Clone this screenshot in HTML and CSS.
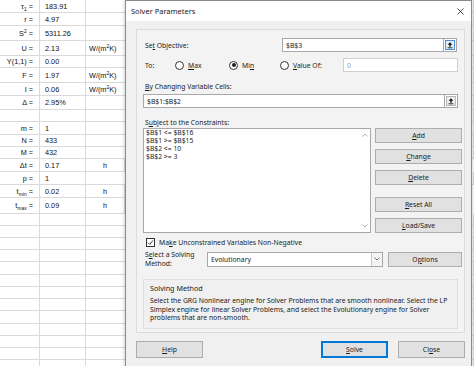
FILE: index.html
```html
<!DOCTYPE html>
<html>
	<head>
		<meta charset="utf-8">
		<title>Solver Parameters</title>
		<link rel="stylesheet" href="styles.css">
	</head>
	<body>
		<div class="sheet">
			<div class="row h13"><div class="lbl"><span>τ<sub>1</sub> =</span></div><div class="val">183.91</div><div class="unit"></div></div>
			<div class="row h13"><div class="lbl"><span>r =</span></div><div class="val">4.97</div><div class="unit"></div></div>
			<div class="row h15"><div class="lbl"><span>S<sup>2</sup> =</span></div><div class="val">5311.26</div><div class="unit"></div></div>
			<div class="row h15"><div class="lbl"><span>U =</span></div><div class="val">2.13</div><div class="unit"><span>W/(m<sup>2</sup>K)</span></div></div>
			<div class="row h12"><div class="lbl"><span>Y(1,1) =</span></div><div class="val">0.00</div><div class="unit"></div></div>
			<div class="row h15"><div class="lbl"><span>F =</span></div><div class="val">1.97</div><div class="unit"><span>W/(m<sup>2</sup>K)</span></div></div>
			<div class="row h13"><div class="lbl"><span>I =</span></div><div class="val">0.06</div><div class="unit"><span>W/(m<sup>2</sup>K)</span></div></div>
			<div class="row h14"><div class="lbl"><span>Δ =</span></div><div class="val">2.95%</div><div class="unit"></div></div>
			<div class="row h12"><div class="lbl"></div><div class="val"></div><div class="unit"></div></div>
			<div class="row h13"><div class="lbl"><span>m =</span></div><div class="val">1</div><div class="unit"></div></div>
			<div class="row h12"><div class="lbl"><span>N =</span></div><div class="val">433</div><div class="unit"></div></div>
			<div class="row h12"><div class="lbl"><span>M =</span></div><div class="val">432</div><div class="unit"></div></div>
			<div class="row h13"><div class="lbl"><span>Δt =</span></div><div class="val">0.17</div><div class="unit mid">h</div></div>
			<div class="row h13"><div class="lbl"><span>p =</span></div><div class="val">1</div><div class="unit"></div></div>
			<div class="row h13"><div class="lbl"><span>t<sub>min</sub> =</span></div><div class="val">0.02</div><div class="unit mid">h</div></div>
			<div class="row h16"><div class="lbl"><span>t<sub>max</sub> =</span></div><div class="val">0.09</div><div class="unit mid">h</div></div>
			<div class="row h12"><div class="lbl"></div><div class="val"></div><div class="unit"></div></div>
			<div class="row h12"><div class="lbl"></div><div class="val"></div><div class="unit"></div></div>
			<div class="row h12"><div class="lbl"></div><div class="val"></div><div class="unit"></div></div>
			<div class="row h12"><div class="lbl"></div><div class="val"></div><div class="unit"></div></div>
			<div class="row h13"><div class="lbl"></div><div class="val"></div><div class="unit"></div></div>
			<div class="row h12"><div class="lbl"></div><div class="val"></div><div class="unit"></div></div>
			<div class="row h12"><div class="lbl"></div><div class="val"></div><div class="unit"></div></div>
			<div class="row h12"><div class="lbl"></div><div class="val"></div><div class="unit"></div></div>
			<div class="row h13"><div class="lbl"></div><div class="val"></div><div class="unit"></div></div>
			<div class="row h12"><div class="lbl"></div><div class="val"></div><div class="unit"></div></div>
			<div class="row h12"><div class="lbl"></div><div class="val"></div><div class="unit"></div></div>
			<div class="row h12"><div class="lbl"></div><div class="val"></div><div class="unit"></div></div>
			<div class="row h13"><div class="lbl"></div><div class="val"></div><div class="unit"></div></div>
		</div>

		<div class="dialog">
			<div class="titlebar">
				<span>Solver Parameters</span>
				<svg class="close" width="7" height="7" viewBox="0 0 7 7"><path d="M0.5 0.5 L6.5 6.5 M6.5 0.5 L0.5 6.5" stroke="#222" stroke-width="0.8"/></svg>
			</div>
			<div class="body">
				<div class="panel">
					<div class="line objective">
						<div class="caption">Se<u>t</u> Objective:</div>
						<div class="field">$B$3</div>
						<div class="ref focus"><svg width="8" height="8" viewBox="0 0 8 8"><path d="M4 0.8 L1.3 3.8 H3.2 V6 H4.8 V3.8 H6.7 Z" fill="#111"/><path d="M1.2 7.2 H6.8" stroke="#111" stroke-width="1"/></svg></div>
					</div>
					<div class="line to">
						<div class="caption to-cap">To:</div>
						<div class="radio max"><span class="dot"></span><span><u>M</u>ax</span></div>
						<div class="radio min"><span class="dot on"></span><span>Mi<u>n</u></span></div>
						<div class="radio value"><span class="dot"></span><span><u>V</u>alue Of:</span></div>
						<div class="field off">0</div>
					</div>
					<div class="caption label"><span><u>B</u>y Changing Variable Cells:</span></div>
					<div class="line cells">
						<div class="field wide">$B$1:$B$2</div>
						<div class="ref"><svg width="8" height="8" viewBox="0 0 8 8"><path d="M4 0.8 L1.3 3.8 H3.2 V6 H4.8 V3.8 H6.7 Z" fill="#111"/><path d="M1.2 7.2 H6.8" stroke="#111" stroke-width="1"/></svg></div>
					</div>
					<div class="caption label"><span>S<u>u</u>bject to the Constraints:</span></div>
					<div class="constraints">
						<div class="listbox">
							<div class="items">
								<div>$B$1 &lt;= $B$16</div>
								<div>$B$1 &gt;= $B$15</div>
								<div>$B$2 &lt;= 10</div>
								<div>$B$2 &gt;= 3</div>
							</div>
							<div class="scroll">
								<svg width="6" height="4" viewBox="0 0 6 4"><path d="M0.5 3.5 L3 1 L5.5 3.5" fill="none" stroke="#9a9a9a" stroke-width="0.8"/></svg>
								<svg width="6" height="4" viewBox="0 0 6 4"><path d="M0.5 0.5 L3 3 L5.5 0.5" fill="none" stroke="#9a9a9a" stroke-width="0.8"/></svg>
							</div>
						</div>
						<div class="side">
							<div class="btn"><span><u>A</u>dd</span></div>
							<div class="btn"><span><u>C</u>hange</span></div>
							<div class="btn"><span><u>D</u>elete</span></div>
							<div class="btn sep"><span><u>R</u>eset All</span></div>
							<div class="btn"><span><u>L</u>oad/Save</span></div>
						</div>
					</div>
					<div class="line check">
						<span class="box"><svg width="7" height="7" viewBox="0 0 7 7"><path d="M1 3.6 L2.8 5.4 L6 1.4" fill="none" stroke="#222" stroke-width="0.9"/></svg></span>
						<span>Ma<u>k</u>e Unconstrained Variables Non-Negative</span>
					</div>
					<div class="line method">
						<div class="caption method-cap">S<u>e</u>lect a Solving<br>Method:</div>
						<div class="select">
							<span>Evolutionary</span>
							<span class="drop"><svg width="6" height="4" viewBox="0 0 6 4"><path d="M0.5 0.5 L3 3 L5.5 0.5" fill="none" stroke="#555" stroke-width="0.8"/></svg></span>
						</div>
						<div class="btn options"><span>O<u>p</u>tions</span></div>
					</div>
					<div class="group">
						<div class="group-title">Solving Method</div>
						<p>Select the GRG Nonlinear engine for Solver Problems that are smooth nonlinear. Select the LP Simplex engine for linear Solver Problems, and select the Evolutionary engine for Solver problems that are non-smooth.</p>
					</div>
				</div>
				<div class="footer">
					<div class="btn big"><span><u>H</u>elp</span></div>
					<div class="btn big default"><span><u>S</u>olve</span></div>
					<div class="btn big"><span>Cl<u>o</u>se</span></div>
				</div>
			</div>
		</div>
	</body>
</html>
```

FILE: styles.css
```css
* {
	margin: 0;
	padding: 0;
	box-sizing: border-box;
}

body {
	width: 474px;
	height: 366px;
	overflow: hidden;
	background-color: #fff;
	position: relative;
}

/* spreadsheet behind the dialog */
.sheet {
	font-family: "Liberation Sans", Arial, sans-serif;
	font-size: 7.3px;
	color: #111;
}

.row {
	display: grid;
	grid-template-columns: 40px 46px 1fr;
}

.h12 { height: 12px; }
.h13 { height: 13px; }
.h14 { height: 14px; }
.h15 { height: 15px; }
.h16 { height: 16px; }

.row > div {
	display: flex;
	align-items: center;
	border-bottom: 1px solid #dadada;
	border-right: 1px solid #dadada;
	white-space: nowrap;
}

.lbl {
	justify-content: flex-end;
	padding-right: 6px;
}

.val {
	padding-left: 5px;
}

.unit {
	padding-left: 3px;
}

.unit.mid {
	justify-content: center;
	padding-left: 0;
	width: 39px;
}

sub,
sup {
	font-size: 5px;
	line-height: 0;
}

/* dialog window */
.dialog {
	position: absolute;
	left: 125px;
	top: 0;
	width: 347px;
	height: 372px;
	border: 1px solid #8a8a8a;
	background-color: #f0f0f0;
	font-family: "Noto Sans", "Open Sans", sans-serif;
	font-size: 6.8px;
	color: #1a1a1a;
	box-shadow: 0 0 4px rgba(0, 0, 0, 0.25);
}

.titlebar {
	height: 20px;
	background-color: #fff;
	display: flex;
	align-items: center;
	justify-content: space-between;
	padding: 0 5px 0 5px;
	font-size: 7.5px;
}

.close {
	margin-right: 2px;
}

.body {
	padding: 8px 6px 0 10px;
}

.panel {
	height: 304px;
	border: 1px solid #dcdcdc;
	background-color: #f3f3f3;
	padding: 0 2px 0 6px;
	display: flex;
	flex-direction: column;
}

.line {
	display: flex;
	align-items: center;
}

.caption {
	padding-left: 2px;
	white-space: nowrap;
}

.objective {
	height: 14px;
	margin-top: 8px;
}

.objective .caption {
	width: 139px;
}

.field {
	height: 14px;
	background-color: #fff;
	border: 1px solid #a8a8a8;
	padding-left: 3px;
	display: flex;
	align-items: center;
}

.objective .field {
	width: 161px;
	border-right: none;
}

.ref {
	width: 14px;
	height: 14px;
	background-color: #fff;
	border: 1px solid #a8a8a8;
	display: flex;
	align-items: center;
	justify-content: center;
}

.ref svg {
	border: 1px solid #b8b8b8;
	background-color: #eee;
	width: 10px;
	height: 10px;
	padding: 0.5px;
}

.ref.focus svg {
	border-color: #4a90d9;
	background-color: #e5f1fb;
}

.to {
	height: 14px;
	margin-top: 6px;
}

.to-cap {
	width: 32px;
}

.radio {
	display: flex;
	align-items: center;
	white-space: nowrap;
}

.radio.max { width: 54px; }
.radio.min { width: 51px; }
.radio.value { width: 63px; }

.dot {
	width: 9px;
	height: 9px;
	border: 1px solid #333;
	border-radius: 50%;
	background-color: #fff;
	margin-right: 4px;
	display: flex;
	align-items: center;
	justify-content: center;
}

.dot.on::after {
	content: "";
	width: 4px;
	height: 4px;
	border-radius: 50%;
	background-color: #222;
}

.field.off {
	flex: 1;
	margin-right: 4px;
	border-color: #cfcfcf;
	color: #9a9a9a;
}

.label {
	height: 12px;
	margin-top: 8px;
	display: flex;
	align-items: center;
}

.cells {
	height: 14px;
	margin-top: 2px;
	margin-right: 4px;
}

.field.wide {
	flex: 1;
	border-right: none;
}

.constraints {
	display: flex;
	gap: 4px;
	height: 105px;
}

.listbox {
	width: 228px;
	background-color: #fff;
	border: 1px solid #a8a8a8;
	display: flex;
}

.items {
	flex: 1;
	padding: 0 0 0 2px;
	line-height: 8px;
}

.scroll {
	width: 11px;
	display: flex;
	flex-direction: column;
	justify-content: space-between;
	align-items: center;
	padding: 4px 0 4px;
}

.side {
	flex: 1;
	display: flex;
	flex-direction: column;
	gap: 6px;
}

.btn {
	height: 15px;
	background-color: #e1e1e1;
	border: 1px solid #adadad;
	display: flex;
	align-items: center;
	justify-content: center;
	white-space: nowrap;
}

.btn.sep {
	margin-top: 6px;
}

.check {
	height: 12px;
	margin-top: 3px;
	padding-left: 3px;
	white-space: nowrap;
}

.box {
	width: 9px;
	height: 9px;
	border: 1px solid #333;
	background-color: #fff;
	margin-right: 4px;
	display: flex;
	align-items: center;
	justify-content: center;
}

.method {
	height: 16px;
	margin-top: 3px;
}

.method-cap {
	width: 64px;
	line-height: 9px;
}

.select {
	width: 176px;
	height: 15px;
	background-color: #fff;
	border: 1px solid #a8a8a8;
	display: flex;
	align-items: center;
	justify-content: space-between;
	padding-left: 3px;
}

.drop {
	width: 11px;
	height: 13px;
	border-left: 1px solid #c8c8c8;
	background-color: #f4f4f4;
	display: flex;
	align-items: center;
	justify-content: center;
}

.options {
	flex: 1;
	margin-left: 5px;
}

.group {
	height: 50px;
	margin-top: 12px;
	margin-right: 4px;
	border: 1px solid #dedede;
	background-color: #f0f0f0;
	padding: 4px 6px 0;
}

.group-title {
	font-size: 7.2px;
	line-height: 9px;
}

.group p {
	margin-top: 4px;
	line-height: 8.5px;
}

.footer {
	display: flex;
	margin-top: 8px;
}

.btn.big {
	width: 67px;
	height: 17px;
}

.btn.default {
	margin-left: auto;
	margin-right: 10px;
	border-color: #0078d7;
	box-shadow: inset 0 0 0 1px #0078d7;
}
```
